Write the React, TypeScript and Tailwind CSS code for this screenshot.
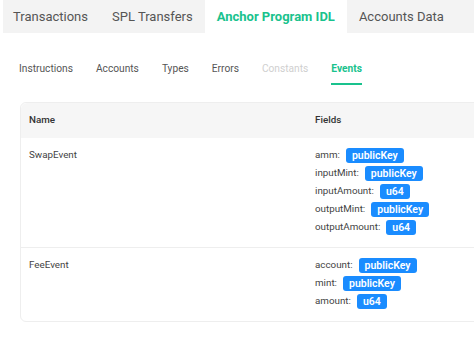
import React from "react";

type Field = { name: string; type: string };
type EventRow = { name: string; fields: Field[] };

const topTabs = ["Transactions", "SPL Transfers", "Anchor Program IDL", "Accounts Data"];
const subTabs = ["Instructions", "Accounts", "Types", "Errors", "Constants", "Events"];

const events: EventRow[] = [
  {
    name: "SwapEvent",
    fields: [
      { name: "amm", type: "publicKey" },
      { name: "inputMint", type: "publicKey" },
      { name: "inputAmount", type: "u64" },
      { name: "outputMint", type: "publicKey" },
      { name: "outputAmount", type: "u64" },
    ],
  },
  {
    name: "FeeEvent",
    fields: [
      { name: "account", type: "publicKey" },
      { name: "mint", type: "publicKey" },
      { name: "amount", type: "u64" },
    ],
  },
];

export default function App() {
  return (
    <div className="w-[474px] h-[353px] overflow-hidden bg-white font-['Roboto',sans-serif]">
      {/* top tabs */}
      <div className="ml-[3px] flex h-[33px] items-stretch bg-[#f3f3f3]">
        {topTabs.map((t) => {
          const active = t === "Anchor Program IDL";
          return (
            <div
              key={t}
              className={`flex shrink-0 items-center whitespace-nowrap px-3 text-[13px] ${
                active ? "bg-white font-bold text-[#19c28d]" : "text-[#555]"
              } ${t === "Transactions" ? "pl-[10px]" : ""}`}
            >
              {t}
            </div>
          );
        })}
      </div>

      {/* sub tabs */}
      <div className="mt-[28px] flex gap-[23px] pl-[19px] text-[10.2px]">
        {subTabs.map((t) => {
          const active = t === "Events";
          return (
            <div
              key={t}
              className={`whitespace-nowrap border-b-2 pb-[7px] ${
                active
                  ? "border-[#19c28d] font-bold text-[#19c28d]"
                  : t === "Constants"
                  ? "border-transparent text-[#cfcfcf]"
                  : "border-transparent text-[#555]"
              }`}
            >
              {t}
            </div>
          );
        })}
      </div>

      {/* table */}
      <div className="ml-[20px] mt-[17px] w-[470px] rounded-[6px] border border-[#eeeeee] text-[9.8px] text-[#444]">
        <div className="flex h-[35px] items-center rounded-t-[6px] bg-[#f6f6f6] font-medium text-[#333]">
          <div className="w-[294px] pl-[8px]">Name</div>
          <div>Fields</div>
        </div>
        {events.map((ev, i) => (
          <div
            key={ev.name}
            className={`flex pt-[8px] pb-[11px] ${i > 0 ? "border-t border-[#eeeeee]" : ""}`}
          >
            <div className="w-[294px] pl-[8px] leading-[18px]">{ev.name}</div>
            <div className="flex flex-col">
              {ev.fields.map((f) => (
                <div key={f.name} className="flex h-[18px] items-center whitespace-nowrap">
                  <span>{f.name}:</span>
                  <span className="ml-[6px] rounded-[3px] bg-[#1a8cff] px-[6px] text-[10.5px] font-semibold leading-[15px] text-white">
                    {f.type}
                  </span>
                </div>
              ))}
            </div>
          </div>
        ))}
      </div>
    </div>
  );
}
